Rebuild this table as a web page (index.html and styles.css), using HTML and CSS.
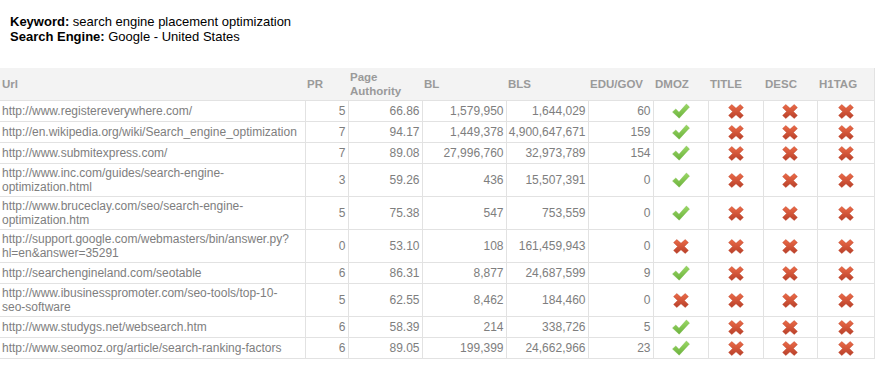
FILE: index.html
```html
<!DOCTYPE html>
<html>
<head>
<meta charset="utf-8">
<link rel="stylesheet" href="styles.css">
</head>
<body>
<svg width="0" height="0" class="defs">
  <defs>
    <linearGradient id="gOk" x1="0" y1="0" x2="0" y2="1">
      <stop offset="0" stop-color="#9ad864"/>
      <stop offset="1" stop-color="#6cb23e"/>
    </linearGradient>
    <linearGradient id="gNo" x1="0" y1="0" x2="0" y2="1">
      <stop offset="0" stop-color="#ec6b48"/>
      <stop offset="1" stop-color="#b8402a"/>
    </linearGradient>
    <symbol id="ok" viewBox="0 0 18 16">
      <path d="M0.5 9 L3.8 6 L7 9.2 L14.4 1 L17.5 4 L7.2 15.2 Z" fill="url(#gOk)" stroke="#78b94a" stroke-width="0.4" stroke-linejoin="round"/>
    </symbol>
    <symbol id="no" viewBox="0 0 16 15">
      <path d="M0.6 3.6 L3.8 0.6 L8 4.3 L12.2 0.6 L15.4 3.6 L11.4 7.5 L15.4 11.4 L12.2 14.4 L8 10.7 L3.8 14.4 L0.6 11.4 L4.6 7.5 Z" fill="url(#gNo)" stroke="#c0482f" stroke-width="0.5" stroke-linejoin="round"/>
    </symbol>
  </defs>
</svg>
<div class="info">
  <div><b>Keyword:</b> search engine placement optimization</div>
  <div><b>Search Engine:</b> Google - United States</div>
</div>
<table class="grid">
  <colgroup>
    <col class="c-url"><col class="c-pr"><col class="c-pa"><col class="c-bl"><col class="c-bls"><col class="c-edu"><col class="c-dm"><col class="c-ti"><col class="c-de"><col class="c-h1">
  </colgroup>
  <thead>
    <tr><th>Url</th><th>PR</th><th>Page Authority</th><th>BL</th><th>BLS</th><th>EDU/GOV</th><th>DMOZ</th><th>TITLE</th><th>DESC</th><th>H1TAG</th></tr>
  </thead>
  <tbody>
    <tr><td class="url">http://www.registereverywhere.com/</td><td>5</td><td>66.86</td><td>1,579,950</td><td>1,644,029</td><td>60</td><td class="ic"><svg class="i-ok"><use href="#ok"/></svg></td><td class="ic"><svg class="i-no"><use href="#no"/></svg></td><td class="ic"><svg class="i-no"><use href="#no"/></svg></td><td class="ic"><svg class="i-no"><use href="#no"/></svg></td></tr>
    <tr><td class="url">http://en.wikipedia.org/wiki/Search_engine_optimization</td><td>7</td><td>94.17</td><td>1,449,378</td><td>4,900,647,671</td><td>159</td><td class="ic"><svg class="i-ok"><use href="#ok"/></svg></td><td class="ic"><svg class="i-no"><use href="#no"/></svg></td><td class="ic"><svg class="i-no"><use href="#no"/></svg></td><td class="ic"><svg class="i-no"><use href="#no"/></svg></td></tr>
    <tr><td class="url">http://www.submitexpress.com/</td><td>7</td><td>89.08</td><td>27,996,760</td><td>32,973,789</td><td>154</td><td class="ic"><svg class="i-ok"><use href="#ok"/></svg></td><td class="ic"><svg class="i-no"><use href="#no"/></svg></td><td class="ic"><svg class="i-no"><use href="#no"/></svg></td><td class="ic"><svg class="i-no"><use href="#no"/></svg></td></tr>
    <tr><td class="url">http://www.inc.com/guides/search-engine-<br>optimization.html</td><td>3</td><td>59.26</td><td>436</td><td>15,507,391</td><td>0</td><td class="ic"><svg class="i-ok"><use href="#ok"/></svg></td><td class="ic"><svg class="i-no"><use href="#no"/></svg></td><td class="ic"><svg class="i-no"><use href="#no"/></svg></td><td class="ic"><svg class="i-no"><use href="#no"/></svg></td></tr>
    <tr><td class="url">http://www.bruceclay.com/seo/search-engine-<br>optimization.htm</td><td>5</td><td>75.38</td><td>547</td><td>753,559</td><td>0</td><td class="ic"><svg class="i-ok"><use href="#ok"/></svg></td><td class="ic"><svg class="i-no"><use href="#no"/></svg></td><td class="ic"><svg class="i-no"><use href="#no"/></svg></td><td class="ic"><svg class="i-no"><use href="#no"/></svg></td></tr>
    <tr><td class="url">http://support.google.com/webmasters/bin/answer.py?<br>hl=en&amp;answer=35291</td><td>0</td><td>53.10</td><td>108</td><td>161,459,943</td><td>0</td><td class="ic"><svg class="i-no"><use href="#no"/></svg></td><td class="ic"><svg class="i-no"><use href="#no"/></svg></td><td class="ic"><svg class="i-no"><use href="#no"/></svg></td><td class="ic"><svg class="i-no"><use href="#no"/></svg></td></tr>
    <tr><td class="url">http://searchengineland.com/seotable</td><td>6</td><td>86.31</td><td>8,877</td><td>24,687,599</td><td>9</td><td class="ic"><svg class="i-ok"><use href="#ok"/></svg></td><td class="ic"><svg class="i-no"><use href="#no"/></svg></td><td class="ic"><svg class="i-no"><use href="#no"/></svg></td><td class="ic"><svg class="i-no"><use href="#no"/></svg></td></tr>
    <tr><td class="url">http://www.ibusinesspromoter.com/seo-tools/top-10-<br>seo-software</td><td>5</td><td>62.55</td><td>8,462</td><td>184,460</td><td>0</td><td class="ic"><svg class="i-no"><use href="#no"/></svg></td><td class="ic"><svg class="i-no"><use href="#no"/></svg></td><td class="ic"><svg class="i-no"><use href="#no"/></svg></td><td class="ic"><svg class="i-no"><use href="#no"/></svg></td></tr>
    <tr><td class="url">http://www.studygs.net/websearch.htm</td><td>6</td><td>58.39</td><td>214</td><td>338,726</td><td>5</td><td class="ic"><svg class="i-ok"><use href="#ok"/></svg></td><td class="ic"><svg class="i-no"><use href="#no"/></svg></td><td class="ic"><svg class="i-no"><use href="#no"/></svg></td><td class="ic"><svg class="i-no"><use href="#no"/></svg></td></tr>
    <tr><td class="url">http://www.seomoz.org/article/search-ranking-factors</td><td>6</td><td>89.05</td><td>199,399</td><td>24,662,966</td><td>23</td><td class="ic"><svg class="i-ok"><use href="#ok"/></svg></td><td class="ic"><svg class="i-no"><use href="#no"/></svg></td><td class="ic"><svg class="i-no"><use href="#no"/></svg></td><td class="ic"><svg class="i-no"><use href="#no"/></svg></td></tr>
  </tbody>
</table>
</body>
</html>
```
FILE: styles.css
```css
html, body {
  margin: 0;
  padding: 0;
  background: #ffffff;
}
body {
  font-family: "Liberation Sans", Arial, sans-serif;
}
.defs {
  position: absolute;
  width: 0;
  height: 0;
  overflow: hidden;
}
.info {
  padding: 14px 0 0 10px;
  font-size: 13px;
  line-height: 15px;
  color: #000;
  height: 68px;
  box-sizing: border-box;
}
.info b {
  font-weight: bold;
}
.grid {
  border-collapse: collapse;
  table-layout: fixed;
  width: 874px;
  font-size: 12px;
  line-height: 14px;
  color: #7e7e7e;
}
.c-url { width: 305px; }
.c-pr { width: 43px; }
.c-pa { width: 74px; }
.c-bl { width: 84px; }
.c-bls { width: 82px; }
.c-edu { width: 65px; }
.c-dm { width: 55px; }
.c-ti { width: 55px; }
.c-de { width: 54px; }
.c-h1 { width: 57px; }
.grid thead th {
  background: #f3f3f3;
  color: #9a9a9a;
  font-size: 11.5px;
  font-weight: bold;
  text-align: left;
  padding: 2px 2px;
  vertical-align: middle;
  height: 28px;
  border-bottom: 1px solid #e2e2e2;
}
.grid thead th:last-child {
  border-right: 1px solid #e2e2e2;
}
.grid td {
  border: 1px solid #e2e2e2;
  padding: 2px 2px;
  text-align: right;
  vertical-align: middle;
  white-space: nowrap;
}
.grid td:first-child {
  border-left: none;
}
.grid td.url {
  text-align: left;
}
.grid td.ic {
  text-align: center;
  padding: 2px 0;
  height: 16px;
}
.grid td.ic svg {
  display: block;
  margin: 0 auto;
}
.grid td.ic svg.i-ok {
  width: 18px;
  height: 16px;
}
.grid td.ic svg.i-no {
  width: 16px;
  height: 15px;
}
```
